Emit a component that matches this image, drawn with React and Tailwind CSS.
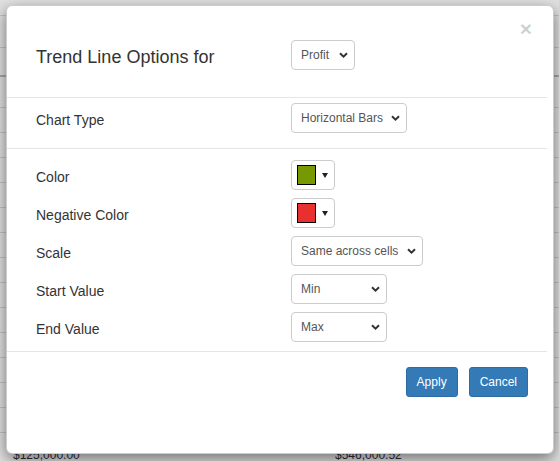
import React from 'react';

const FONT = { fontFamily: '"Liberation Sans", Arial, sans-serif' };

function Chevron() {
  return (
    <svg
      width="9"
      height="6"
      viewBox="0 0 9 6"
      className="pointer-events-none absolute right-[7px] top-1/2 -translate-y-1/2"
    >
      <path d="M1 1.2 L4.5 4.6 L8 1.2" fill="none" stroke="#333" strokeWidth="2" />
    </svg>
  );
}

function Select({ value, options, width }) {
  return (
    <div className={`relative ${width}`}>
      <select
        defaultValue={value}
        style={FONT}
        className="h-[30px] w-full appearance-none rounded-[4px] border border-[#ccc] bg-white pl-[9px] pr-5 text-[12px] text-[#555] outline-none"
      >
        {options.map((o) => (
          <option key={o}>{o}</option>
        ))}
      </select>
      <Chevron />
    </div>
  );
}

function ColorButton({ color }) {
  return (
    <button
      type="button"
      className="flex h-[30px] w-[44px] items-center rounded-[4px] border border-[#ccc] bg-white pl-[5px]"
    >
      <span className={`block h-[20px] w-[19px] border border-black ${color}`} />
      <svg width="6" height="5" viewBox="0 0 6 5" className="ml-[6px]">
        <path d="M0 0 L6 0 L3 5 Z" fill="#222" />
      </svg>
    </button>
  );
}

function Row({ label, children }) {
  return (
    <div className="flex h-[30px] items-center">
      <span className="w-[255px] pt-[4px] text-[14px] text-[#333]">{label}</span>
      {children}
    </div>
  );
}

// the table behind the dialog: only its ruled rows peek out at the edges
const ROWS = [
  'h-[16px] border-b border-[#c4c4c4]',
  'h-[32px] border-b border-[#c4c4c4]',
  'h-[29px] border-b-2 border-[#a9a9a9]',
  'h-[31px] border-b border-[#c4c4c4]',
  ...Array.from({ length: 13 }, () => 'h-[25px] border-b border-[#c4c4c4]'),
];

export default function App() {
  return (
    <div style={FONT} className="relative h-[461px] w-[559px] overflow-hidden bg-[#e2e2e2]">
      <div className="flex flex-col">
        {ROWS.map((cls, i) => (
          <div key={i} className={cls} />
        ))}
        <div className="flex pt-[13px] text-[12px] text-[#2b2b3a]">
          <span className="w-[335px] pl-[13px]">$125,000.00</span>
          <span>$546,000.52</span>
        </div>
      </div>

      <div className="absolute left-[6px] top-[5px] flex h-[449px] w-[548px] flex-col rounded-[6px] border border-black/20 bg-white shadow-[0_5px_15px_rgba(0,0,0,0.5)]">
        <button
          type="button"
          className="absolute right-[21px] top-[12px] text-[21px] font-bold leading-none text-black/20"
        >
          ×
        </button>

        <div className="mr-[6px] flex items-center border-b border-[#e5e5e5] pb-[27px] pl-[29px] pt-[34px]">
          <h4 className="w-[255px] pt-[5px] text-[18px] leading-tight text-[#333]">
            Trend Line Options for
          </h4>
          <Select value="Profit" options={['Profit', 'Sales', 'Quantity']} width="w-[64px]" />
        </div>

        <div className="mr-[6px] border-b border-[#e5e5e5] pb-[15px] pl-[29px] pt-[5px]">
          <Row label="Chart Type">
            <Select
              value="Horizontal Bars"
              options={['Horizontal Bars', 'Line', 'Column']}
              width="w-[116px]"
            />
          </Row>
        </div>

        <div className="mr-[6px] flex flex-col gap-2 border-b border-[#e5e5e5] pb-[9px] pl-[29px] pt-[11px]">
          <Row label="Color">
            <ColorButton color="bg-[#789800]" />
          </Row>
          <Row label="Negative Color">
            <ColorButton color="bg-[#e8302f]" />
          </Row>
          <Row label="Scale">
            <Select
              value="Same across cells"
              options={['Same across cells', 'Per cell']}
              width="w-[132px]"
            />
          </Row>
          <Row label="Start Value">
            <Select value="Min" options={['Min', 'Zero', 'Custom']} width="w-[96px]" />
          </Row>
          <Row label="End Value">
            <Select value="Max" options={['Max', 'Zero', 'Custom']} width="w-[96px]" />
          </Row>
        </div>

        <div className="mr-[6px] flex justify-end gap-[11px] pr-[19px] pt-[15px]">
          <button
            type="button"
            className="h-[30px] rounded-[3px] border border-[#2e6da4] bg-[#337ab7] px-[10px] text-[12px] text-white"
          >
            Apply
          </button>
          <button
            type="button"
            className="h-[30px] rounded-[3px] border border-[#2e6da4] bg-[#337ab7] px-[10px] text-[12px] text-white"
          >
            Cancel
          </button>
        </div>
      </div>
    </div>
  );
}
